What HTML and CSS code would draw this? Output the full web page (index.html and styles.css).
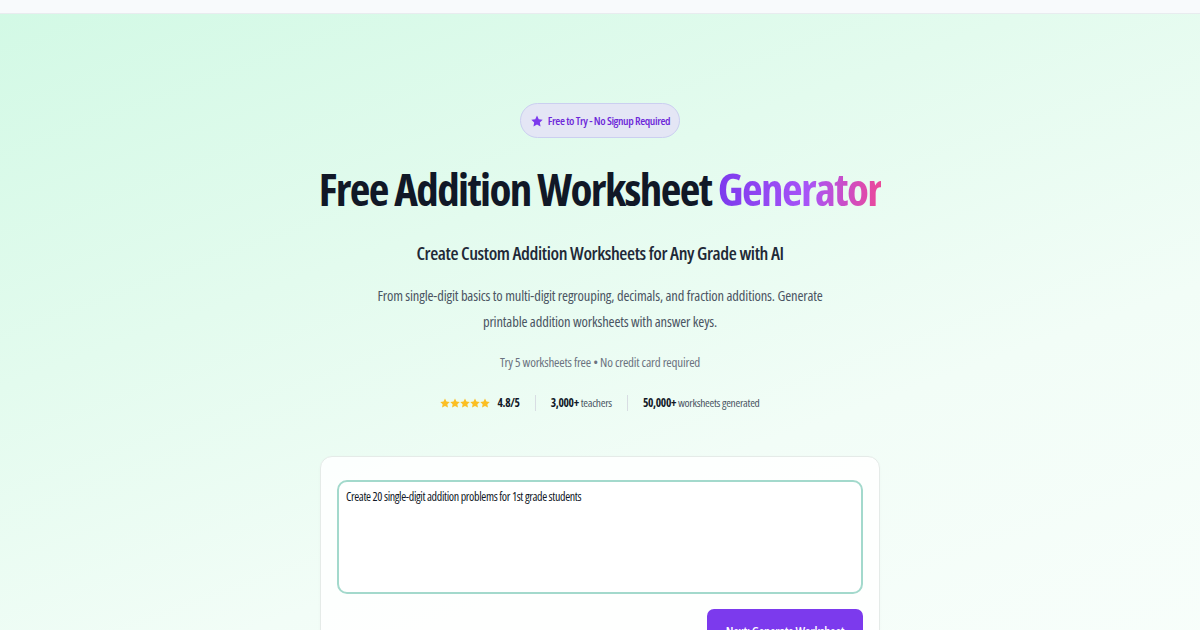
FILE: index.html
```html
<!DOCTYPE html>
<html lang="en">
<head>
<meta charset="utf-8">
<title>Free Addition Worksheet Generator</title>
<link rel="stylesheet" href="styles.css">
</head>
<body>
<div class="topbar"></div>
<main class="hero">
  <div class="badge">
    <svg class="badge-star" viewBox="1 1 22 21" width="12" height="12"><path d="M12 1.5l3.2 6.6 7.2 1-5.2 5.1 1.3 7.2L12 18l-6.5 3.4 1.3-7.2L1.6 9.1l7.2-1z" fill="currentColor"/></svg>
    <span>Free to Try - No Signup Required</span>
  </div>
  <h1 class="title">Free Addition Worksheet <span class="grad">Generator</span></h1>
  <h2 class="subtitle">Create Custom Addition Worksheets for Any Grade with AI</h2>
  <p class="lead">From single-digit basics to multi-digit regrouping, decimals, and fraction additions. Generate printable addition worksheets with answer keys.</p>
  <p class="note">Try 5 worksheets free • No credit card required</p>
  <div class="stats">
    <div class="stat rating">
      <span class="stars">
        <svg viewBox="1 1 22 21"><path d="M12 1.5l3.2 6.6 7.2 1-5.2 5.1 1.3 7.2L12 18l-6.5 3.4 1.3-7.2L1.6 9.1l7.2-1z"/></svg>
        <svg viewBox="1 1 22 21"><path d="M12 1.5l3.2 6.6 7.2 1-5.2 5.1 1.3 7.2L12 18l-6.5 3.4 1.3-7.2L1.6 9.1l7.2-1z"/></svg>
        <svg viewBox="1 1 22 21"><path d="M12 1.5l3.2 6.6 7.2 1-5.2 5.1 1.3 7.2L12 18l-6.5 3.4 1.3-7.2L1.6 9.1l7.2-1z"/></svg>
        <svg viewBox="1 1 22 21"><path d="M12 1.5l3.2 6.6 7.2 1-5.2 5.1 1.3 7.2L12 18l-6.5 3.4 1.3-7.2L1.6 9.1l7.2-1z"/></svg>
        <svg viewBox="1 1 22 21"><path d="M12 1.5l3.2 6.6 7.2 1-5.2 5.1 1.3 7.2L12 18l-6.5 3.4 1.3-7.2L1.6 9.1l7.2-1z"/></svg>
      </span>
      <b>4.8/5</b>
    </div>
    <span class="divider"></span>
    <div class="stat"><b>3,000+</b> teachers</div>
    <span class="divider"></span>
    <div class="stat"><b>50,000+</b> worksheets generated</div>
  </div>
  <section class="card">
    <textarea class="prompt">Create 20 single-digit addition problems for 1st grade students</textarea>
    <div class="actions">
      <button class="btn">Next: Generate Worksheet</button>
    </div>
  </section>
</main>
</body>
</html>
```

FILE: styles.css
```css
* { box-sizing: border-box; }
html, body { margin: 0; padding: 0; }
body {
  min-height: 630px;
  overflow: hidden;
  font-family: "Open Sans", "Liberation Sans", sans-serif;
  font-stretch: 75%;
  color: #111827;
  background: linear-gradient(160deg, #d2f9e5 0%, #e3fbee 35%, #f2fdf7 65%, #f8fefb 100%);
}
.topbar {
  height: 14px;
  background: #f8fafc;
  border-bottom: 1px solid #e8ecef;
}
.hero {
  display: flex;
  flex-direction: column;
  align-items: center;
  padding-top: 89px;
}
.badge {
  display: inline-flex;
  align-items: center;
  gap: 5px;
  height: 35px;
  padding: 0 9px 0 10px;
  border-radius: 999px;
  background: #e4e6f5;
  border: 1px solid #cbcff0;
  color: #6d28d9;
  font-size: 11.5px;
  letter-spacing: -0.4px;
  font-weight: 600;
}
.badge-star { color: #7c3aed; }
.title {
  margin: 19px 0 0;
  font-size: 45px;
  line-height: 64px;
  font-weight: 700;
  letter-spacing: -1.6px;
  color: #111827;
}
.grad {
  background: linear-gradient(90deg, #7c3aed 0%, #a855f7 55%, #ec4899 100%);
  -webkit-background-clip: text;
  background-clip: text;
  color: transparent;
}
.subtitle {
  margin: 18px 0 0;
  font-size: 18.5px;
  line-height: 28px;
  letter-spacing: -0.4px;
  font-weight: 600;
  color: #1f2937;
}
.lead {
  margin: 16px 0 0;
  max-width: 458px;
  text-align: center;
  font-size: 14.5px;
  line-height: 26px;
  letter-spacing: -0.15px;
  color: #4b5563;
}
.note {
  margin: 17px 0 0;
  font-size: 13px;
  line-height: 20px;
  letter-spacing: -0.2px;
  color: #6b7280;
}
.stats {
  display: flex;
  align-items: center;
  gap: 15px;
  margin-top: 21px;
  font-size: 11.5px;
  line-height: 20px;
  letter-spacing: -0.3px;
  color: #4b5563;
}
.stats b { color: #111827; font-weight: 700; }
.rating { display: flex; align-items: center; gap: 7px; }
.stars { display: inline-flex; gap: 0; }
.stars svg { width: 10px; height: 10px; fill: #fbbf24; }
.divider { width: 1px; height: 16px; background: #d8dde3; }
.card {
  margin-top: 43px;
  width: 560px;
  padding: 23px 16px 20px;
  background: rgba(255, 255, 255, 0.85);
  border: 1px solid #e5ebe8;
  border-radius: 12px;
  box-shadow: 0 1px 3px rgba(0,0,0,0.03);
}
.prompt {
  display: block;
  width: 100%;
  height: 114px;
  padding: 6px 7px;
  resize: none;
  border: 2px solid #a3d9cc;
  border-radius: 10px;
  background: #fff;
  font-family: inherit;
  font-stretch: 75%;
  font-size: 12px;
  letter-spacing: -0.35px;
  line-height: 18px;
  color: #111827;
  outline: none;
}
.actions {
  display: flex;
  justify-content: flex-end;
  margin-top: 15px;
}
.btn {
  width: 156px;
  height: 44px;
  border: 0;
  border-radius: 7px;
  background: #7c3aed;
  color: #fff;
  font-family: inherit;
  font-stretch: 75%;
  font-size: 13px;
  letter-spacing: -0.3px;
  font-weight: 600;
}
```
